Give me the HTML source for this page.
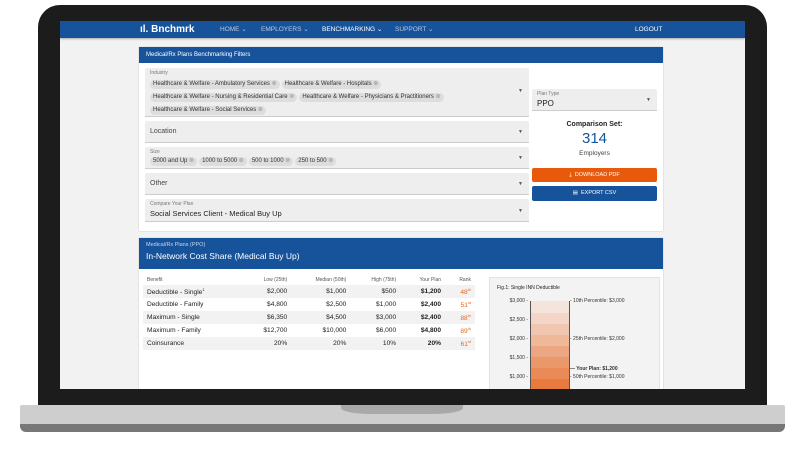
<!DOCTYPE html>
<html><head><meta charset="utf-8"><style>
*{margin:0;padding:0;box-sizing:border-box}
body{width:800px;height:450px;background:#fff;position:relative;overflow:hidden;font-family:"Liberation Sans",sans-serif;color:#222}
.a{position:absolute}
.bezel{left:38px;top:5px;width:729px;height:400px;background:#1c1c1c;border-radius:22px 22px 0 0}
.screen{left:60px;top:21px;width:685px;height:368px;background:#f2f2f2;overflow:hidden}
.nav{left:0;top:0;width:685px;height:17px;background:#17539b;color:#b9c9e0;font-size:6.5px;box-shadow:0 1px 2px rgba(0,0,0,.3)}
.nav span{position:absolute;top:5px;line-height:8px}
.card{background:#fff;box-shadow:0 0 1px rgba(0,0,0,.3)}
.hdr{background:#17539b;color:#fff}
.fld{background:#eee;border-bottom:1px solid #ccc;border-radius:2px 2px 0 0}
.lbl{font-size:5px;color:#777;position:absolute;left:5px}
.chips{display:flex;column-gap:2px;white-space:nowrap}
.chip{display:block;height:9px;background:#ddd;border-radius:5px;font-size:6px;line-height:9px;padding:0 3px;color:#333;white-space:nowrap}
.chip:after{content:" ⊗";color:#999}
.arr{position:absolute;right:6px;font-size:5px;color:#555}
.big{font-size:8px;color:#444;position:absolute;left:5px}
table{border-collapse:collapse;font-size:6.6px}
td{height:13px;padding:0 4px;text-align:right}
td:first-child{text-align:left}
tr.s td{background:#f2f2f2}
.rk{color:#e8671a}
sup{font-size:4px}
.th td{font-size:5px;color:#555;height:11px}
.yl{font-size:5px;color:#333;text-align:right;width:40px}
.rl{font-size:5px;color:#333}
</style></head><body>
<div class="a bezel"></div>
<div class="a screen">
 <div class="a nav">
  <span style="left:80px;top:3px;font-size:10px;line-height:11px;color:#fff;font-weight:bold">ıl. Bnchmrk</span>
  <span style="left:160px">HOME ⌄</span>
  <span style="left:201px">EMPLOYERS ⌄</span>
  <span style="left:262px;color:#fff">BENCHMARKING ⌄</span>
  <span style="left:335px">SUPPORT ⌄</span>
  <span style="left:575px;color:#fff">LOGOUT</span>
 </div>
 <div class="a card" style="left:79px;top:26px;width:524px;height:184px">
  <div class="a hdr" style="left:0;top:0;width:524px;height:16px;font-size:6px;padding:5px 7px">Medical/Rx Plans Benchmarking Filters</div>
  <div class="a fld" style="left:6px;top:21px;width:384px;height:49px">
   <div class="lbl" style="top:2px">Industry</div>
   <div class="a chips" style="left:5px;top:12px"><span class="chip">Healthcare &amp; Welfare - Ambulatory Services</span><span class="chip">Healthcare &amp; Welfare - Hospitals</span></div>
   <div class="a chips" style="left:5px;top:25px"><span class="chip">Healthcare &amp; Welfare - Nursing &amp; Residential Care</span><span class="chip">Healthcare &amp; Welfare - Physicians &amp; Practitioners</span></div>
   <div class="a chips" style="left:5px;top:38px"><span class="chip">Healthcare &amp; Welfare - Social Services</span></div>
   <div class="arr" style="top:20px">▼</div>
  </div>
  <div class="a fld" style="left:6px;top:74px;width:384px;height:22px"><div class="big" style="top:7px;font-size:7px">Location</div><div class="arr" style="top:8px">▼</div></div>
  <div class="a fld" style="left:6px;top:100px;width:384px;height:22px"><div class="lbl" style="top:2px">Size</div><div class="a chips" style="left:5px;top:10px"><span class="chip">5000 and Up</span><span class="chip">1000 to 5000</span><span class="chip">500 to 1000</span><span class="chip">250 to 500</span></div><div class="arr" style="top:8px">▼</div></div>
  <div class="a fld" style="left:6px;top:126px;width:384px;height:22px"><div class="big" style="top:7px;font-size:7px">Other</div><div class="arr" style="top:8px">▼</div></div>
  <div class="a fld" style="left:6px;top:152px;width:384px;height:23px"><div class="lbl" style="top:2px">Compare Your Plan</div><div class="big" style="top:10px;color:#222;font-size:7.5px">Social Services Client - Medical Buy Up</div><div class="arr" style="top:9px">▼</div></div>
  <div class="a fld" style="left:393px;top:42px;width:125px;height:22px"><div class="lbl" style="top:2px">Plan Type</div><div class="big" style="top:10px;color:#222">PPO</div><div class="arr" style="top:8px">▼</div></div>
  <div class="a" style="left:393px;top:74px;width:125px;text-align:center;font-size:7px;font-weight:bold">Comparison Set:</div>
  <div class="a" style="left:393px;top:83px;width:125px;text-align:center;font-size:15px;color:#17539b">314</div>
  <div class="a" style="left:393px;top:103px;width:125px;text-align:center;font-size:6.5px;color:#444">Employers</div>
  <div class="a" style="left:393px;top:121px;width:125px;height:14px;background:#e8590c;border-radius:2px;color:#fff;font-size:5.5px;text-align:center;line-height:14px">⤓ &nbsp;DOWNLOAD PDF</div>
  <div class="a" style="left:393px;top:139px;width:125px;height:15px;background:#17539b;border-radius:2px;color:#fff;font-size:5.5px;text-align:center;line-height:15px">▤ &nbsp;EXPORT CSV</div>
 </div>
 <div class="a card" style="left:79px;top:217px;width:524px;height:160px">
  <div class="a hdr" style="left:0;top:0;width:524px;height:31px;padding:4px 7px"><div style="font-size:5.5px;color:#cbd8ea">Medical/Rx Plans (PPO)</div><div style="font-size:8.5px;margin-top:3px">In-Network Cost Share (Medical Buy Up)</div></div>
  <table class="a" style="left:4px;top:36px;width:332px">
   <tr class="th"><td>Benefit</td><td>Low (25th)</td><td>Median (50th)</td><td>High (75th)</td><td>Your Plan</td><td>Rank</td></tr>
   <tr class="s"><td>Deductible - Single<sup>1</sup></td><td>$2,000</td><td>$1,000</td><td>$500</td><td><b>$1,200</b></td><td class="rk">48<sup>th</sup></td></tr>
   <tr><td>Deductible - Family</td><td>$4,800</td><td>$2,500</td><td>$1,000</td><td><b>$2,400</b></td><td class="rk">51<sup>st</sup></td></tr>
   <tr class="s"><td>Maximum - Single</td><td>$6,350</td><td>$4,500</td><td>$3,000</td><td><b>$2,400</b></td><td class="rk">88<sup>th</sup></td></tr>
   <tr><td>Maximum - Family</td><td>$12,700</td><td>$10,000</td><td>$6,000</td><td><b>$4,800</b></td><td class="rk">89<sup>th</sup></td></tr>
   <tr class="s"><td>Coinsurance</td><td>20%</td><td>20%</td><td>10%</td><td><b>20%</b></td><td class="rk">61<sup>st</sup></td></tr>
  </table>
  <div class="a" style="left:350px;top:39px;width:171px;height:130px;background:#f3f3f3;border:1px solid #e2e2e2">
   <div class="a" style="left:7px;top:7px;font-size:5px">Fig.1: Single INN Deductible</div>
   <div class="a" style="left:41px;top:23px;width:38px;height:120px;background:linear-gradient(#f5e4dc 0 12px,#f3d6c8 12px 23px,#f0c6b0 23px 34px,#eeb899 34px 45px,#eca782 45px 56px,#ea976a 56px 67px,#ea8a56 67px 78px,#e97a3e 78px)"></div>
   <div class="a" style="left:40px;top:23px;width:1px;height:100px;background:#555"></div>
   <div class="a" style="left:79px;top:23px;width:1px;height:100px;background:#555"></div>
   <div class="a yl" style="left:-2px;top:20px">$3,000 -</div>
   <div class="a yl" style="left:-2px;top:39px">$2,500 -</div>
   <div class="a yl" style="left:-2px;top:58px">$2,000 -</div>
   <div class="a yl" style="left:-2px;top:77px">$1,500 -</div>
   <div class="a yl" style="left:-2px;top:96px">$1,000 -</div>
   <div class="a rl" style="left:80px;top:20px">- 10th Percentile: $3,000</div>
   <div class="a rl" style="left:80px;top:58px">- 25th Percentile: $2,000</div>
   <div class="a rl" style="left:80px;top:88px;font-weight:bold">— Your Plan: $1,200</div>
   <div class="a rl" style="left:80px;top:96px">- 50th Percentile: $1,000</div>
  </div>
 </div>
</div>
<div class="a" style="left:20px;top:405px;width:765px;height:19px;background:#cecece;border-radius:2px 2px 0 0"></div>
<div class="a" style="left:341px;top:405px;width:122px;height:9px;background:#a8a8a8;border-radius:0 0 30px 30px/0 0 6px 6px"></div>
<div class="a" style="left:20px;top:424px;width:765px;height:8px;background:#777;border-radius:0 0 6px 6px"></div>
</body></html>
